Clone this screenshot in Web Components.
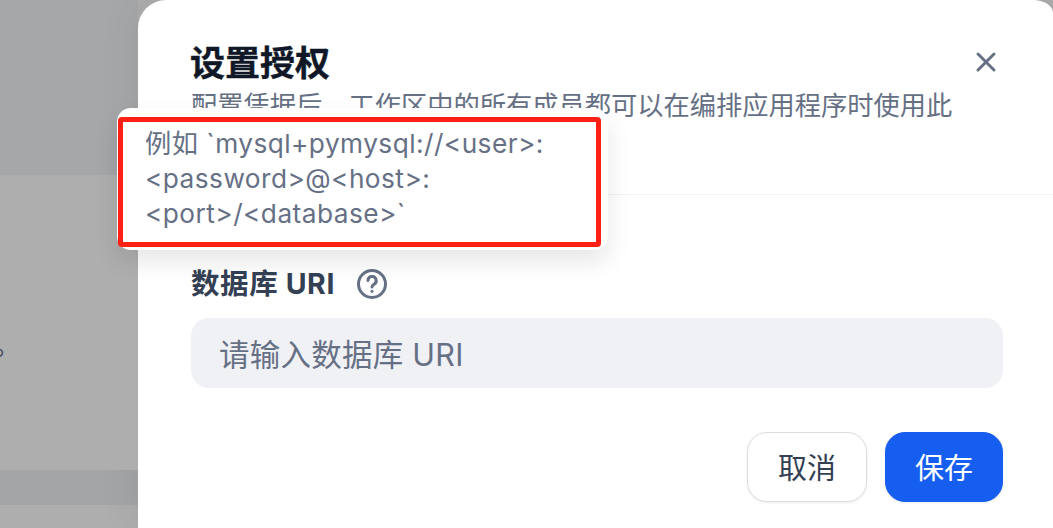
<!DOCTYPE html>
<html>
<head>
<meta charset="utf-8">
<title>设置授权</title>
<style>
  html, body { margin: 0; height: 100%; overflow: hidden; }
  body { font-family: "Inter", "Noto Sans CJK SC", sans-serif; }
</style>
</head>
<body>
<auth-page>
  <auth-dialog heading="设置授权">
    配置凭据后，工作区中的所有成员都可以在编排应用程序时使用此
    <auth-field slot="field" label="数据库 URI" placeholder="请输入数据库 URI"></auth-field>
    <auth-button slot="actions">取消</auth-button>
    <auth-button slot="actions" primary>保存</auth-button>
  </auth-dialog>
  <auth-tip slot="tip">例如 `mysql+pymysql://&lt;user&gt;:<br>&lt;password&gt;@&lt;host&gt;:<br>&lt;port&gt;/&lt;database&gt;`</auth-tip>
</auth-page>

<script>
class AuthPage extends HTMLElement {
  constructor() {
    super();
    this.attachShadow({mode: 'open'}).innerHTML = `
      <style>
        :host { display: flex; position: relative; width: 1053px; height: 528px; overflow: hidden; background: #adadad; }
        .backdrop { width: 138px; flex: none; display: flex; flex-direction: column; }
        .band { flex: none; }
        .top { height: 175px; background: #a6a7a9; }
        .main { height: 295px; background: #aeaeae; position: relative; }
        .foot { height: 35px; background: #a4a5a7; }
        .rest { flex: 1; background: #aeaeae; }
        .dot { position: absolute; left: -6px; top: 156px; font: 26px/26px "Noto Sans CJK SC", sans-serif; color: #3f4654; }
      </style>
      <div class="backdrop">
        <div class="band top"></div>
        <div class="band main"><span class="dot">。</span></div>
        <div class="band foot"></div>
        <div class="band rest"></div>
      </div>
      <slot></slot>
      <slot name="tip"></slot>
    `;
  }
}

class AuthDialog extends HTMLElement {
  constructor() {
    super();
    this.attachShadow({mode: 'open'}).innerHTML = `
      <style>
        :host { display: block; flex: 1; min-width: 0; background: #fff; border-radius: 28px 20px 0 0 / 28px 13px 0 0; box-shadow: 0 0 40px rgba(0,0,0,.08); }
        header { position: relative; height: 195px; box-sizing: border-box; padding: 38px 90px 0 53px; border-bottom: 1px solid #f2f4f7; }
        h2 { margin: 0 0 0 -1px; font: 700 35px/50px "Inter", "Noto Sans CJK SC", sans-serif; color: #101828; -webkit-text-stroke: .4px #101828; }
        p { margin: 0; font: 400 26.25px/36px "Inter", "Noto Sans CJK SC", sans-serif; color: #667085; }
        button { position: absolute; top: 47px; right: 52px; width: 30px; height: 30px; padding: 0; border: 0; background: none; color: #667085; }
        svg { display: block; }
        .body { padding: 69px 50px 0 53px; }
        .actions { display: flex; justify-content: flex-end; gap: 18px; margin-top: 44px; }
      </style>
      <header>
        <h2></h2>
        <p><slot></slot></p>
        <button aria-label="关闭">
          <svg width="30" height="30" viewBox="0 0 30 30" fill="none" stroke="currentColor" stroke-width="3" stroke-linecap="round">
            <path d="M7 7l16 16M23 7L7 23"/>
          </svg>
        </button>
      </header>
      <div class="body">
        <slot name="field"></slot>
        <div class="actions"><slot name="actions"></slot></div>
      </div>
    `;
    this.shadowRoot.querySelector('h2').textContent = this.getAttribute('heading');
  }
}

class AuthField extends HTMLElement {
  constructor() {
    super();
    this.attachShadow({mode: 'open'}).innerHTML = `
      <style>
        :host { display: block; }
        .label { display: flex; align-items: center; gap: 21px; height: 40px; font: 700 28.5px/40px "Inter", "Noto Sans CJK SC", sans-serif; color: #344054; margin-bottom: 14px; }
        .label span { letter-spacing: .6px; }
        svg { display: block; }
        .input { height: 70px; box-sizing: border-box; padding: 0 28px; border-radius: 18px; background: #f0f1f5; font: 400 30.5px/73px "Inter", "Noto Sans CJK SC", sans-serif; letter-spacing: .25px; color: #667085; }
      </style>
      <div class="label">
        <span></span>
        <svg width="32" height="32" viewBox="0 0 32 32" fill="none" stroke="#667085" stroke-width="3" stroke-linecap="round" stroke-linejoin="round">
          <circle cx="16" cy="16" r="13.5"/>
          <path d="M12 12.6a4.1 4.1 0 1 1 5.9 3.7c-1.2.6-1.9 1.4-1.9 2.6"/>
          <path d="M16 23.2v.1"/>
        </svg>
      </div>
      <div class="input"></div>
    `;
    this.shadowRoot.querySelector('.label span').textContent = this.getAttribute('label');
    this.shadowRoot.querySelector('.input').textContent = this.getAttribute('placeholder');
  }
}

class AuthButton extends HTMLElement {
  constructor() {
    super();
    this.attachShadow({mode: 'open'}).innerHTML = `
      <style>
        :host { display: flex; align-items: center; justify-content: center; box-sizing: border-box; width: 120px; height: 70px; padding-bottom: 2px; border-radius: 20px; border: 1px solid #dcdde0; background: #fff; color: #344054; font: 400 29px "Noto Sans CJK SC", sans-serif; box-shadow: 0 1px 3px rgba(16,24,40,.08); }
        :host([primary]) { width: 118px; background: #155eef; border-color: #155eef; color: #fff; }
      </style>
      <slot></slot>
    `;
  }
}

class AuthTip extends HTMLElement {
  constructor() {
    super();
    this.attachShadow({mode: 'open'}).innerHTML = `
      <style>
        :host { display: block; position: absolute; left: 117px; top: 108px; width: 491px; height: 142px; box-sizing: border-box; padding: 18px 20px 0 28px; background: #fff; border-radius: 14px; box-shadow: 0 12px 24px rgba(16,24,40,.10); font: 400 26.25px/35px "Inter", "Noto Sans CJK SC", sans-serif; letter-spacing: .45px; color: #667085; white-space: nowrap; }
        .mark { position: absolute; left: 1px; top: 9px; width: 483px; height: 130px; box-sizing: border-box; border: 5px solid #ff2015; border-radius: 4px; }
      </style>
      <slot></slot>
      <div class="mark"></div>
    `;
  }
}

customElements.define('auth-page', AuthPage);
customElements.define('auth-dialog', AuthDialog);
customElements.define('auth-field', AuthField);
customElements.define('auth-button', AuthButton);
customElements.define('auth-tip', AuthTip);
</script>
</body>
</html>
